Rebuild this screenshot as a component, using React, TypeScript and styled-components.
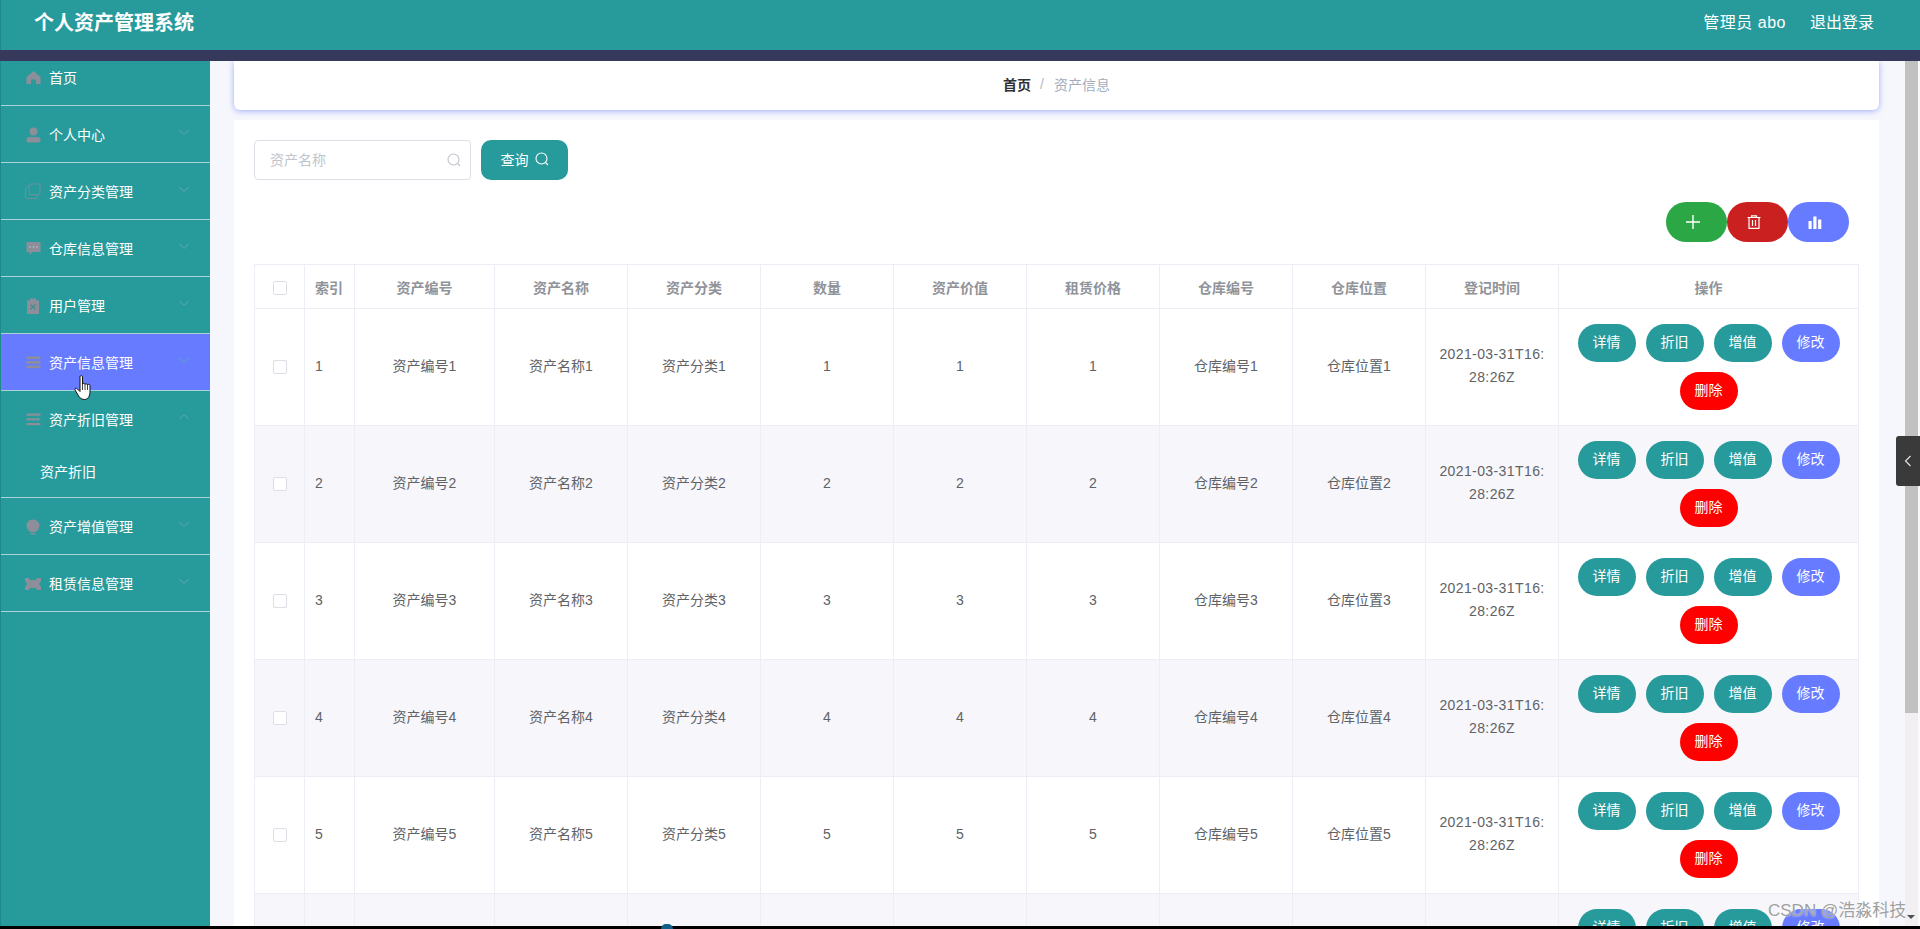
import React from 'react'
import styled, { createGlobalStyle } from 'styled-components'

const TEAL = '#279a9c'
const PURPLE = '#667bff'
const ICON_GREY = '#8c8f9a'

const GlobalStyle = createGlobalStyle`
    html, body {
        margin: 0;
        height: 100%;
        overflow: hidden;
    }
    body {
        font-family: "Liberation Sans", "Noto Sans CJK SC", sans-serif;
        font-size: 14px;
    }
    * {
        box-sizing: border-box;
    }
`

const Page = styled.div`
    position: relative;
    height: 929px;
    display: flex;
    flex-direction: column;
    overflow: hidden;
    background: #f6f7fc;
`

const TopBar = styled.header`
    flex: 0 0 50px;
    display: flex;
    align-items: center;
    justify-content: space-between;
    padding: 0 46px 8px 33px;
    background: ${TEAL};
    border-left: 1px solid #1e8a8c;
    color: #fff;
    position: relative;
    z-index: 3;
`

const Brand = styled.div`
    font-size: 20px;
    font-weight: 700;
`

const UserArea = styled.div`
    display: flex;
    gap: 24px;
    font-size: 16px;
`

const UserName = styled.span`
    letter-spacing: 0.5px;
`

const DarkStrip = styled.div`
    flex: 0 0 11px;
    background: #36395c;
    position: relative;
    z-index: 3;
`

const Body = styled.div`
    flex: 1;
    display: flex;
    min-height: 0;
`

const Sidebar = styled.nav`
    flex: 0 0 210px;
    background: ${TEAL};
    border-left: 1px solid #1e8a8c;
    overflow: hidden;
`

const SideList = styled.div`
    margin: -12px 0 0 -1px;
`

const SideGroup = styled.div`
    border-bottom: 1px solid #a9d3d4;
`

const SideItem = styled.div<{ $active?: boolean }>`
    height: 56px;
    display: flex;
    align-items: center;
    padding: 1px 0 0 25px;
    color: #fff;
    background: ${p => (p.$active ? PURPLE : 'transparent')};
`

const IconSlot = styled.span`
    width: 16px;
    height: 16px;
    margin-right: 8px;
    display: flex;
    align-items: center;
    justify-content: center;
    flex: none;
`

const SideLabel = styled.span`
    flex: 1;
    line-height: 20px;
`

const Arrow = styled.svg`
    width: 12px;
    height: 12px;
    margin-right: 20px;
    flex: none;
    position: relative;
    top: -3px;
`

const SubItem = styled.div`
    height: 50px;
    display: flex;
    align-items: center;
    padding: 0 0 2px 40px;
    color: #fff;
`

const Main = styled.main`
    flex: 1;
    min-width: 0;
    padding: 0 26px 0 24px;
    overflow: hidden;
`

const Crumbs = styled.div`
    height: 49px;
    display: flex;
    align-items: center;
    justify-content: center;
    padding-bottom: 3px;
    background: #fff;
    border-radius: 0 0 6px 6px;
    box-shadow: 0 1px 6px rgba(102, 123, 255, 0.6);
    position: relative;
    z-index: 1;
`

const CrumbHome = styled.span`
    color: #303133;
    font-weight: 700;
`

const CrumbSlash = styled.span`
    color: #b5b9c4;
    margin: 0 9px;
`

const CrumbCurrent = styled.span`
    color: #a3adbd;
    margin-left: 1px;
`

const Panel = styled.section`
    margin-top: 10px;
    padding: 20px;
    background: #fff;
`

const SearchRow = styled.div`
    display: flex;
    gap: 10px;
`

const SearchBox = styled.div`
    position: relative;
    width: 217px;
    height: 40px;
`

const SearchInput = styled.input`
    width: 100%;
    height: 100%;
    padding: 0 30px 0 15px;
    border: 1px solid #dcdfe6;
    border-radius: 4px;
    font: inherit;
    outline: none;

    &::placeholder {
        color: #c0c4cc;
    }
`

const SearchGlyph = styled.span`
    position: absolute;
    right: 10px;
    top: 13px;
    display: flex;
`

const QueryButton = styled.button`
    width: 87px;
    height: 40px;
    display: flex;
    align-items: center;
    justify-content: center;
    gap: 6px;
    padding: 0 0 2px;
    border: 0;
    border-radius: 10px;
    background: ${TEAL};
    color: #fff;
    font: inherit;
`

const ActionRow = styled.div`
    display: flex;
    justify-content: flex-end;
    margin: 22px 10px 22px 0;
`

const ActionButton = styled.button<{ $color: string }>`
    width: 61px;
    height: 40px;
    display: flex;
    align-items: center;
    justify-content: center;
    padding: 0 7px 0 0;
    border: 0;
    border-radius: 20px;
    background: ${p => p.$color};
`

const Grid = styled.table`
    width: 1605px;
    table-layout: fixed;
    border-collapse: separate;
    border-spacing: 0;
    border-top: 1px solid #ebeef5;
    border-left: 1px solid #ebeef5;
`

const HeadRow = styled.tr`
    height: 44px;
`

const Row = styled.tr<{ $striped: boolean }>`
    height: 117px;
    background: ${p => (p.$striped ? '#f6f6fb' : '#fff')};
`

const HeadCell = styled.th<{ $left?: boolean }>`
    padding: 0 10px;
    border-right: 1px solid #ebeef5;
    border-bottom: 1px solid #ebeef5;
    color: #909399;
    font-weight: 700;
    text-align: ${p => (p.$left ? 'left' : 'center')};
`

const Cell = styled.td<{ $left?: boolean }>`
    padding: 0 10px 2px;
    border-right: 1px solid #ebeef5;
    border-bottom: 1px solid #ebeef5;
    color: #606266;
    line-height: 23px;
    text-align: ${p => (p.$left ? 'left' : 'center')};
`

const DateLine = styled.span`
    display: block;
    letter-spacing: 0.4px;
    white-space: nowrap;
`

const Tick = styled.span`
    display: inline-block;
    width: 14px;
    height: 14px;
    border: 1px solid #dcdfe6;
    border-radius: 2px;
    background: #fff;
    vertical-align: middle;
`

const OpsWrap = styled.div`
    display: flex;
    flex-wrap: wrap;
    justify-content: center;
    gap: 10px;
    padding-top: 1px;
`

const OpButton = styled.button<{ $color: string }>`
    width: 58px;
    height: 38px;
    padding: 0;
    border: 0;
    border-radius: 19px;
    background: ${p => p.$color};
    color: #fff;
    font: inherit;
`

const ScrollTrack = styled.div`
    flex: 0 0 15px;
    background: #f1eff1;
    border-right: 2px solid #fafafa;
`

const ScrollThumb = styled.div`
    height: 652px;
    background: #c1c1c1;
`

const SideHandle = styled.div`
    position: absolute;
    right: 0;
    top: 436px;
    width: 24px;
    height: 50px;
    display: flex;
    align-items: center;
    justify-content: center;
    background: #3a3a3a;
    border-radius: 3px 0 0 3px;
    z-index: 2;
`

const Watermark = styled.div`
    position: absolute;
    left: 1768px;
    top: 899px;
    font-size: 17px;
    line-height: 24px;
    color: #a0a0a0;
    text-shadow: 0 0 2px #fff;
    white-space: nowrap;
    z-index: 4;
`

const ScrollDownMark = styled.div`
    position: absolute;
    left: 1907px;
    top: 915px;
    border-left: 4px solid transparent;
    border-right: 4px solid transparent;
    border-top: 4px solid #505050;
    z-index: 4;
`

const Taskbar = styled.div`
    position: absolute;
    left: 0;
    right: 0;
    bottom: 0;
    height: 3px;
    background: #000;
    z-index: 5;
`

const TaskbarDot = styled.div`
    position: absolute;
    left: 661px;
    bottom: 0;
    width: 12px;
    height: 5px;
    border-radius: 6px 6px 0 0;
    background: #0f5f86;
    z-index: 6;
`

const Pointer = styled.svg`
    position: absolute;
    left: 74px;
    top: 375px;
    z-index: 4;
`

const HomeIcon = () => (
    <svg width="15" height="15" viewBox="0 0 15 15">
        <path fill={ICON_GREY} d="M7.5 1 L14.5 7 V14 H10 V9.5 H5 V14 H0.5 V7 Z" />
    </svg>
)

const UserIcon = () => (
    <svg width="15" height="16" viewBox="0 0 15 16">
        <circle fill={ICON_GREY} cx="7.5" cy="4.5" r="4" />
        <rect fill={ICON_GREY} x="0.5" y="10" width="14" height="5.5" rx="2.5" />
    </svg>
)

const CopyIcon = () => (
    <svg width="17" height="17" viewBox="0 0 17 17" fill="none" stroke="#768f9b" strokeWidth="1">
        <rect x="4.5" y="0.5" width="11.5" height="11.5" rx="1.5" />
        <path d="M4 3.5 H2 Q0.5 3.5 0.5 5 V14.5 Q0.5 16 2 16 H11.5 Q13 16 13 14.5 V12.5" />
    </svg>
)

const ChatIcon = () => (
    <svg width="15" height="15" viewBox="0 0 15 15">
        <path fill={ICON_GREY} d="M0.5 1 H14.5 V11 H6.5 L3.5 14 V11 H0.5 Z" />
        <circle fill="#c2c5cc" cx="4" cy="6" r="0.8" />
        <circle fill="#c2c5cc" cx="7.5" cy="6" r="0.8" />
        <circle fill="#c2c5cc" cx="11" cy="6" r="0.8" />
    </svg>
)

const ClipboardIcon = () => (
    <svg width="14" height="16" viewBox="0 0 14 16">
        <path fill={ICON_GREY} d="M1 2.5 H4 V0.5 H10 V2.5 H13 V16 H1 Z" />
        <path stroke="#3f8d93" strokeWidth="1.1" fill="none" d="M4.5 6.5 L9.5 11.5 M9.5 6.5 L4.5 11.5" />
    </svg>
)

const BarsIcon = () => (
    <svg width="15" height="13" viewBox="0 0 15 13">
        <rect fill={ICON_GREY} x="0.5" y="0.5" width="14" height="2.6" />
        <rect fill={ICON_GREY} x="0.5" y="5" width="14" height="2.6" />
        <rect fill={ICON_GREY} x="0.5" y="9.6" width="14" height="2.6" />
    </svg>
)

const FoldIcon = () => (
    <svg width="15" height="13" viewBox="0 0 15 13">
        <rect fill={ICON_GREY} x="0.5" y="0.5" width="14" height="2.2" />
        <rect fill={ICON_GREY} x="0.5" y="5.2" width="10" height="2.2" />
        <path fill={ICON_GREY} d="M11 4 L14.5 6.3 L11 8.6 Z" />
        <rect fill={ICON_GREY} x="0.5" y="10" width="14" height="2.2" />
    </svg>
)

const BulbIcon = () => (
    <svg width="14" height="16" viewBox="0 0 14 16">
        <path fill={ICON_GREY} d="M7 0.5 C3 0.5 0.5 3.4 0.5 6.6 C0.5 9.8 2.8 11.6 4 13 H10 C11.2 11.6 13.5 9.8 13.5 6.6 C13.5 3.4 11 0.5 7 0.5 Z" />
        <rect fill={ICON_GREY} x="4.5" y="14" width="5" height="1.4" />
    </svg>
)

const TicketIcon = () => (
    <svg width="16" height="12" viewBox="0 0 16 12">
        <path fill={ICON_GREY} d="M0 0 H4 L5 2 H11 L12 0 H16 V3 L14 6 L16 9 V12 H12 L11 10 H5 L4 12 H0 V9 L2 6 L0 3 Z" />
    </svg>
)

const Chevron = ({ up }: { up?: boolean }) => (
    <Arrow viewBox="0 0 12 12" fill="none" stroke="#63aab0" strokeWidth="1">
        <path d={up ? 'M1.5 8 L6 3.5 L10.5 8' : 'M1.5 4 L6 8.5 L10.5 4'} />
    </Arrow>
)

const SearchIcon = ({ color }: { color: string }) => (
    <svg width="14" height="14" viewBox="0 0 14 14" fill="none" stroke={color} strokeWidth="1.1">
        <circle cx="6.5" cy="6.5" r="5.5" />
        <path d="M10.5 10.5 L13 13" />
    </svg>
)

type NavEntry = { label: string; icon: React.ReactNode; arrow?: boolean; active?: boolean; open?: boolean; sub?: string }

const navEntries: NavEntry[] = [
    { label: '首页', icon: <HomeIcon /> },
    { label: '个人中心', icon: <UserIcon />, arrow: true },
    { label: '资产分类管理', icon: <CopyIcon />, arrow: true },
    { label: '仓库信息管理', icon: <ChatIcon />, arrow: true },
    { label: '用户管理', icon: <ClipboardIcon />, arrow: true },
    { label: '资产信息管理', icon: <BarsIcon />, arrow: true, active: true },
    { label: '资产折旧管理', icon: <FoldIcon />, arrow: true, open: true, sub: '资产折旧' },
    { label: '资产增值管理', icon: <BulbIcon />, arrow: true },
    { label: '租赁信息管理', icon: <TicketIcon />, arrow: true },
]

const columns = ['资产编号', '资产名称', '资产分类', '数量', '资产价值', '租赁价格', '仓库编号', '仓库位置', '登记时间']
const widths = [140, 133, 133, 133, 133, 133, 133, 133, 133]

const App = () => (
    <Page>
        <GlobalStyle />
        <TopBar>
            <Brand>个人资产管理系统</Brand>
            <UserArea>
                <UserName>管理员 abo</UserName>
                <span>退出登录</span>
            </UserArea>
        </TopBar>
        <DarkStrip />
        <Body>
            <Sidebar>
                <SideList>
                    {navEntries.map(entry => (
                        <SideGroup key={entry.label}>
                            <SideItem $active={entry.active}>
                                <IconSlot>{entry.icon}</IconSlot>
                                <SideLabel>{entry.label}</SideLabel>
                                {entry.arrow && <Chevron up={entry.open} />}
                            </SideItem>
                            {entry.sub && <SubItem>{entry.sub}</SubItem>}
                        </SideGroup>
                    ))}
                </SideList>
            </Sidebar>
            <Main>
                <Crumbs>
                    <CrumbHome>首页</CrumbHome>
                    <CrumbSlash>/</CrumbSlash>
                    <CrumbCurrent>资产信息</CrumbCurrent>
                </Crumbs>
                <Panel>
                    <SearchRow>
                        <SearchBox>
                            <SearchInput placeholder="资产名称" />
                            <SearchGlyph>
                                <SearchIcon color="#c0c4cc" />
                            </SearchGlyph>
                        </SearchBox>
                        <QueryButton>
                            查询
                            <SearchIcon color="#fff" />
                        </QueryButton>
                    </SearchRow>
                    <ActionRow>
                        <ActionButton $color="#2ca745">
                            <svg width="14" height="14" viewBox="0 0 14 14" stroke="#fff" strokeWidth="1.4">
                                <path d="M7 0 V14 M0 7 H14" />
                            </svg>
                        </ActionButton>
                        <ActionButton $color="#cb2020">
                            <svg width="14" height="14" viewBox="0 0 14 14" fill="none" stroke="#fff" strokeWidth="1.2">
                                <path d="M0.5 2.5 H13.5 M4.5 2.5 V0.8 H9.5 V2.5 M2 2.5 V13.4 H12 V2.5 M5.5 5 V11 M8.5 5 V11" />
                            </svg>
                        </ActionButton>
                        <ActionButton $color={PURPLE}>
                            <svg width="14" height="13" viewBox="0 0 14 13" fill="#fff">
                                <rect x="0.5" y="5" width="3.2" height="8" />
                                <rect x="5.3" y="0.5" width="3.2" height="12.5" />
                                <rect x="10.1" y="3.5" width="3.2" height="9.5" />
                            </svg>
                        </ActionButton>
                    </ActionRow>
                    <Grid>
                        <colgroup>
                            <col width={50} />
                            <col width={50} />
                            {widths.map((w, i) => (
                                <col key={i} width={w} />
                            ))}
                            <col width={300} />
                        </colgroup>
                        <thead>
                            <HeadRow>
                                <HeadCell>
                                    <Tick />
                                </HeadCell>
                                <HeadCell $left>索引</HeadCell>
                                {columns.map(c => (
                                    <HeadCell key={c}>{c}</HeadCell>
                                ))}
                                <HeadCell>操作</HeadCell>
                            </HeadRow>
                        </thead>
                        <tbody>
                            {[1, 2, 3, 4, 5, 6].map(n => (
                                <Row key={n} $striped={n % 2 === 0}>
                                    <Cell>
                                        <Tick />
                                    </Cell>
                                    <Cell $left>{n}</Cell>
                                    <Cell>资产编号{n}</Cell>
                                    <Cell>资产名称{n}</Cell>
                                    <Cell>资产分类{n}</Cell>
                                    <Cell>{n}</Cell>
                                    <Cell>{n}</Cell>
                                    <Cell>{n}</Cell>
                                    <Cell>仓库编号{n}</Cell>
                                    <Cell>仓库位置{n}</Cell>
                                    <Cell>
                                        <DateLine>2021-03-31T16:</DateLine>
                                        <DateLine>28:26Z</DateLine>
                                    </Cell>
                                    <Cell>
                                        <OpsWrap>
                                            <OpButton $color={TEAL}>详情</OpButton>
                                            <OpButton $color={TEAL}>折旧</OpButton>
                                            <OpButton $color={TEAL}>增值</OpButton>
                                            <OpButton $color={PURPLE}>修改</OpButton>
                                            <OpButton $color="#ff0000">删除</OpButton>
                                        </OpsWrap>
                                    </Cell>
                                </Row>
                            ))}
                        </tbody>
                    </Grid>
                </Panel>
            </Main>
            <ScrollTrack>
                <ScrollThumb />
            </ScrollTrack>
        </Body>
        <SideHandle>
            <svg width="10" height="14" viewBox="0 0 10 14" fill="none" stroke="#e8e8e8" strokeWidth="1.1">
                <path d="M7.5 2 L2.5 7 L7.5 12" />
            </svg>
        </SideHandle>
        <Pointer width="20" height="26" viewBox="0 0 20 26">
            <path
                fill="#fff"
                stroke="#111"
                strokeWidth="1"
                strokeLinejoin="round"
                d="M6 1.5 C6 0.5 8.5 0.5 8.5 1.5 V9 C8.5 8 11 8 11 9.5 C11 8.5 13.5 8.5 13.5 10 C13.5 9 16 9 16 10.5 V17 C16 21 14 24.5 10.5 24.5 C7 24.5 5.5 22.5 4 20 L1 15 C0.5 13.5 2.2 12.5 3.5 14 L6 16.5 Z"
            />
            <path stroke="#111" strokeWidth="0.8" d="M8.5 9 V15 M11 9.5 V15 M13.5 10 V15" />
        </Pointer>
        <Watermark>CSDN @浩淼科技</Watermark>
        <ScrollDownMark />
        <Taskbar />
        <TaskbarDot />
    </Page>
)

export default App
